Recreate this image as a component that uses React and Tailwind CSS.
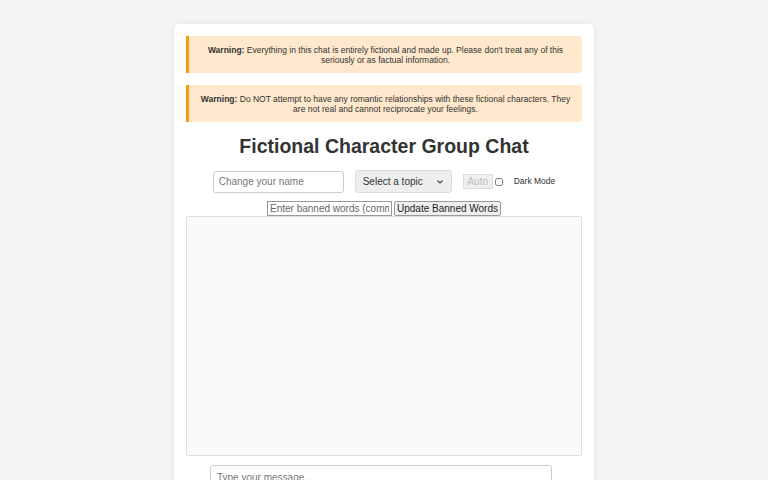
export default function App() {
  return (
    <div className="min-h-screen bg-[#f5f5f5] pt-6 font-['Liberation_Sans',Arial,sans-serif] text-[#333]">
      <div className="mx-auto w-[420px] h-[470px] bg-white rounded shadow-[0_0_6px_rgba(0,0,0,0.08)] px-3 pt-3">
        <div className="bg-[#ffe8cc] border-l-[3px] border-[#f39c12] rounded-r px-2 h-[37px] flex items-center justify-center text-center text-[8.5px] leading-[10px] text-[#333]">
          <p>
            <b>Warning:</b> Everything in this chat is entirely fictional and made up. Please don't treat any of this seriously or as factual information.
          </p>
        </div>
        <div className="mt-3 bg-[#ffe8cc] border-l-[3px] border-[#f39c12] rounded-r px-2 h-[37px] flex items-center justify-center text-center text-[8.5px] leading-[10px] text-[#333]">
          <p>
            <b>Warning:</b> Do NOT attempt to have any romantic relationships with these fictional characters. They are not real and cannot reciprocate your feelings.
          </p>
        </div>
        <h1 className="mt-3 text-center text-[19.5px] leading-[24px] font-bold text-[#333]">
          Fictional Character Group Chat
        </h1>
        <div className="mt-[12px] flex items-center justify-center">
          <input
            className="block w-[131px] h-[22px] border border-[#ccc] rounded-[3px] px-[5px] text-[10px] placeholder:text-[#777] outline-none"
            placeholder="Change your name"
          />
          <div className="ml-[11px] relative w-[97px] h-[23px]">
            <select className="block appearance-none w-full h-full bg-[#eee] border border-[#ddd] rounded-[3px] pl-[7px] text-[10px] text-[#333]">
              <option>Select a topic</option>
            </select>
            <svg className="absolute right-[9px] top-[10px] pointer-events-none" width="6" height="4" viewBox="0 0 6 4">
              <path d="M0.5 0.5 L3 3 L5.5 0.5" fill="none" stroke="#444" strokeWidth="1.2" />
            </svg>
          </div>
          <button disabled className="ml-[11px] w-[30px] h-[15px] bg-[#efefef] border border-[#ddd] text-[10px] leading-[13px] text-[#bbb]">
            Auto
          </button>
          <input type="checkbox" className="ml-[2px] w-[8px] h-[8px]" />
          <span className="ml-[11px] text-[8.5px]">Dark Mode</span>
        </div>
        <div className="mt-[8px] flex items-center justify-center">
          <input
            className="block w-[125px] h-[15px] border border-[#999] px-[2px] text-[10px] placeholder:text-[#666] outline-none"
            placeholder="Enter banned words (comma separated)"
          />
          <button className="ml-[2px] w-[107px] h-[15px] bg-[#efefef] border border-[#999] rounded-[2px] text-[10px] leading-[13px] text-[#222]">
            Update Banned Words
          </button>
        </div>
        <div className="h-[240px] border border-[#ddd] rounded-[2px] bg-[#fafafa]" />
        <div className="mt-[9px] pl-[24px]">
          <input
            className="block w-[342px] h-[24px] border border-[#ccc] rounded-[3px] px-[6px] text-[10px] placeholder:text-[#777] outline-none"
            placeholder="Type your message..."
          />
        </div>
      </div>
    </div>
  );
}
